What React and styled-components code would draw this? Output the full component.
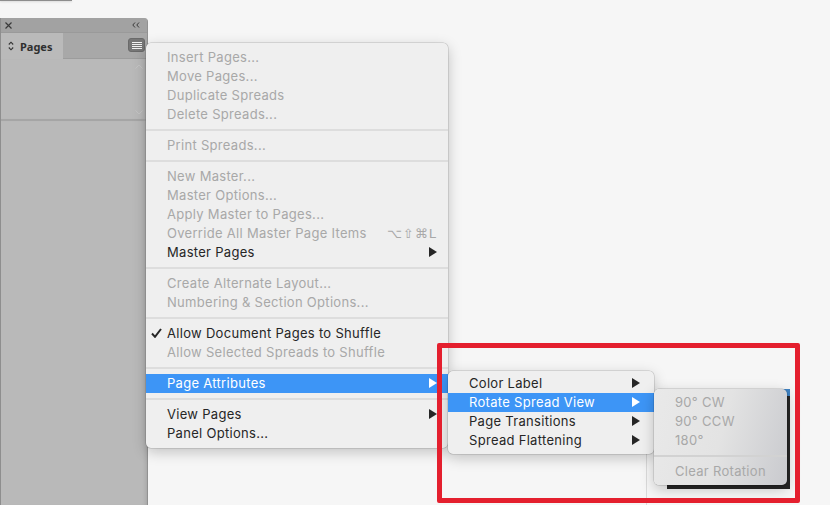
import React from 'react';
import styled, { createGlobalStyle } from 'styled-components';

const GlobalStyle = createGlobalStyle`
  html, body { margin: 0; padding: 0; }
  body {
    background: #f6f6f6;
    font-family: Inter, "Noto Sans", "DejaVu Sans", sans-serif;
    -webkit-font-smoothing: antialiased;
  }
`;

const Screen = styled.div`
  position: relative;
  width: 830px;
  height: 505px;
  overflow: hidden;
  display: flex;
  background: #f6f6f6;
`;

// left docked panel
const LeftColumn = styled.div`
  width: 148px;
  flex: none;
  display: flex;
  flex-direction: column;
`;

const TopStub = styled.div`
  width: 72px;
  height: 1px;
  background: #8d8d8d;
  box-shadow: 0 1px 2px rgba(0, 0, 0, 0.15);
  margin-bottom: 17px;
`;

const Panel = styled.div`
  flex: 1;
  display: flex;
  flex-direction: column;
  background: #b9b9b9;
  border-left: 1px solid #8e8e8e;
  border-right: 1px solid #919191;
  border-top-right-radius: 4px;
  overflow: hidden;
`;

const PanelHeader = styled.div`
  height: 14px;
  flex: none;
  display: flex;
  align-items: center;
  justify-content: space-between;
  padding: 0 7px 0 4px;
  background: #a2a2a2;
  border-bottom: 1px solid #9a9a9a;
`;

const TabRow = styled.div`
  height: 26px;
  flex: none;
  display: flex;
  background: #a8a8a8;
`;

const Tab = styled.div`
  width: 62px;
  display: flex;
  align-items: center;
  gap: 6px;
  padding-left: 7px;
  box-sizing: border-box;
  background: #bababa;
  font-family: "Noto Sans", Inter, sans-serif;
  font-size: 11px;
  font-weight: 700;
  color: #2f2f2f;
`;

const TabFiller = styled.div`
  flex: 1;
  display: flex;
  justify-content: flex-end;
  align-items: flex-start;
  padding: 5px 2px 0 0;
  border-bottom: 1px solid #9c9c9c;
`;

const MenuButton = styled.div`
  width: 17px;
  height: 14px;
  box-sizing: border-box;
  border: 1px solid #6a6a6a;
  border-radius: 3px;
  background: #777777;
  display: flex;
  flex-direction: column;
  justify-content: center;
  align-items: center;
  gap: 1px;
`;

const MenuLine = styled.span`
  width: 10px;
  height: 1px;
  background: #f2f2f2;
`;

const ThumbArea = styled.div`
  height: 62px;
  flex: none;
  display: flex;
  flex-direction: column;
  justify-content: space-between;
  align-items: flex-end;
  padding: 5px 4px 4px 0;
  box-sizing: border-box;
  border-bottom: 2px solid #a5a5a5;
  box-shadow: inset -4px 0 4px -3px rgba(0, 0, 0, 0.12);
`;

const PanelRest = styled.div`
  flex: 1;
  box-shadow: inset -4px 0 4px -3px rgba(0, 0, 0, 0.12);
`;

// document area to the right of the panel
const Workspace = styled.div`
  flex: 1;
  position: relative;
`;

const PageEdge = styled.div`
  position: absolute;
  left: 498px;
  top: 380px;
  bottom: 0;
  width: 1px;
  background: #dadada;
`;

const Thumbnail = styled.div`
  position: absolute;
  left: 519px;
  top: 389px;
  width: 123px;
  height: 100px;
  background: #262626;
  border-top: 7px solid #3f83c4;
  box-sizing: border-box;
`;

// menus
const MenuBase = styled.div`
  position: absolute;
  box-sizing: border-box;
  width: ${p => p.$width}px;
  padding: ${p => p.$pad};
  background: ${p => p.$bg || '#efefef'};
  border-radius: 5px;
  box-shadow: 0 0 0 0.5px rgba(0, 0, 0, 0.2), 0 4px 14px rgba(0, 0, 0, 0.22);
`;

const MainMenu = styled(MenuBase)`
  left: 146px;
  top: 43px;
  z-index: 5;
`;

const SubMenu = styled(MenuBase)`
  left: 100%;
  top: ${p => p.$top}px;
  z-index: 6;
`;

const Item = styled.div`
  position: relative;
  height: 19px;
  box-sizing: border-box;
  padding-bottom: 1px;
  display: flex;
  align-items: center;
  padding-right: ${p => p.$padRight}px;
  font-size: 13px;
  letter-spacing: 0.3px;
  white-space: nowrap;
  color: ${p => (p.$active ? '#ffffff' : p.$disabled ? '#a8a8a8' : '#262626')};
  background: ${p => (p.$active ? '#3d95f6' : 'transparent')};
`;

const Gutter = styled.span`
  width: 21px;
  flex: none;
  display: flex;
  justify-content: center;
`;

const Label = styled.span`
  flex: 1;
`;

const Shortcut = styled.span`
  font-family: "DejaVu Sans", sans-serif;
  font-size: 13px;
  letter-spacing: 1px;
`;

const Separator = styled.div`
  height: 2px;
  margin: 5px 0;
  background: ${p => p.$color || '#dddddd'};
`;

const Annotation = styled.div`
  position: absolute;
  left: 437px;
  top: 343px;
  width: 363px;
  height: 160px;
  box-sizing: border-box;
  border: 5px solid #e41f2e;
  border-radius: 2px;
  z-index: 10;
  pointer-events: none;
`;

const Arrow = ({ color }) => (
  <svg width="8" height="10" viewBox="0 0 8 10">
    <polygon points="0,0 8,5 0,10" fill={color} />
  </svg>
);

const Check = () => (
  <svg width="11" height="10" viewBox="0 0 11 10">
    <path d="M1 5.5 L4 8.8 L10 1" fill="none" stroke="#262626" strokeWidth="2" />
  </svg>
);

const rotateItems = [
  { label: '90° CW', disabled: true },
  { label: '90° CCW', disabled: true },
  { label: '180°', disabled: true },
  'sep',
  { label: 'Clear Rotation', disabled: true },
];

const attributeItems = [
  { label: 'Color Label', arrow: true },
  {
    label: 'Rotate Spread View', arrow: true, active: true,
    sub: {
      width: 133, top: -4, pad: '4px 0 4px',
      bg: 'linear-gradient(105deg, #e9e9e9 0%, #e3e3e3 50%, #c9cace 100%)',
      sepColor: '#d2d2d2', items: rotateItems,
    },
  },
  { label: 'Page Transitions', arrow: true },
  { label: 'Spread Flattening', arrow: true },
];

const mainItems = [
  { label: 'Insert Pages...', disabled: true },
  { label: 'Move Pages...', disabled: true },
  { label: 'Duplicate Spreads', disabled: true },
  { label: 'Delete Spreads...', disabled: true },
  'sep',
  { label: 'Print Spreads...', disabled: true },
  'sep',
  { label: 'New Master...', disabled: true },
  { label: 'Master Options...', disabled: true },
  { label: 'Apply Master to Pages...', disabled: true },
  { label: 'Override All Master Page Items', disabled: true, shortcut: '⌥⇧⌘L' },
  { label: 'Master Pages', arrow: true },
  'sep',
  { label: 'Create Alternate Layout...', disabled: true },
  { label: 'Numbering & Section Options...', disabled: true },
  'sep',
  { label: 'Allow Document Pages to Shuffle', checked: true },
  { label: 'Allow Selected Spreads to Shuffle', disabled: true },
  'sep',
  {
    label: 'Page Attributes', arrow: true, active: true,
    sub: { width: 206, top: -3, pad: '3px 0 4px', padRight: 14, items: attributeItems },
  },
  'sep',
  { label: 'View Pages', arrow: true },
  { label: 'Panel Options...' },
];

function MenuItems({ items, padRight = 11, sepColor }) {
  return items.map((it, i) => {
    if (it === 'sep') return <Separator key={i} $color={sepColor} />;
    return (
      <Item key={i} $active={it.active} $disabled={it.disabled} $padRight={padRight}>
        <Gutter>{it.checked && <Check />}</Gutter>
        <Label>{it.label}</Label>
        {it.shortcut && <Shortcut>{it.shortcut}</Shortcut>}
        {it.arrow && <Arrow color={it.active ? '#ffffff' : '#262626'} />}
        {it.sub && (
          <SubMenu $width={it.sub.width} $top={it.sub.top} $pad={it.sub.pad} $bg={it.sub.bg}>
            <MenuItems items={it.sub.items} padRight={it.sub.padRight || 11} sepColor={it.sub.sepColor} />
          </SubMenu>
        )}
      </Item>
    );
  });
}

export default function App() {
  return (
    <Screen>
      <GlobalStyle />
      <LeftColumn>
        <TopStub />
        <Panel>
          <PanelHeader>
            <svg width="7" height="7" viewBox="0 0 7 7">
              <path d="M0.5 0.5 L6.5 6.5 M6.5 0.5 L0.5 6.5" stroke="#3a3a3a" strokeWidth="1.2" />
            </svg>
            <svg width="8" height="6" viewBox="0 0 8 6">
              <path d="M3 0.5 L0.8 3 L3 5.5 M7 0.5 L4.8 3 L7 5.5" fill="none" stroke="#3a3a3a" strokeWidth="1" />
            </svg>
          </PanelHeader>
          <TabRow>
            <Tab>
              <svg width="6" height="10" viewBox="0 0 6 10">
                <path d="M0.8 3.5 L3 1.2 L5.2 3.5 M0.8 6.5 L3 8.8 L5.2 6.5" fill="none" stroke="#333" strokeWidth="1.1" />
              </svg>
              Pages
            </Tab>
            <TabFiller>
              <MenuButton>
                <MenuLine />
                <MenuLine />
                <MenuLine />
                <MenuLine />
              </MenuButton>
            </TabFiller>
          </TabRow>
          <ThumbArea>
            <svg width="8" height="5" viewBox="0 0 8 5">
              <path d="M0.5 4.5 L4 1 L7.5 4.5" fill="none" stroke="#c4c4c4" strokeWidth="1" />
            </svg>
            <svg width="8" height="5" viewBox="0 0 8 5">
              <path d="M0.5 0.5 L4 4 L7.5 0.5" fill="none" stroke="#c4c4c4" strokeWidth="1" />
            </svg>
          </ThumbArea>
          <PanelRest />
        </Panel>
      </LeftColumn>
      <Workspace>
        <PageEdge />
        <Thumbnail />
      </Workspace>
      <MainMenu $width={302} $pad="5px 0">
        <MenuItems items={mainItems} />
      </MainMenu>
      <Annotation />
    </Screen>
  );
}
